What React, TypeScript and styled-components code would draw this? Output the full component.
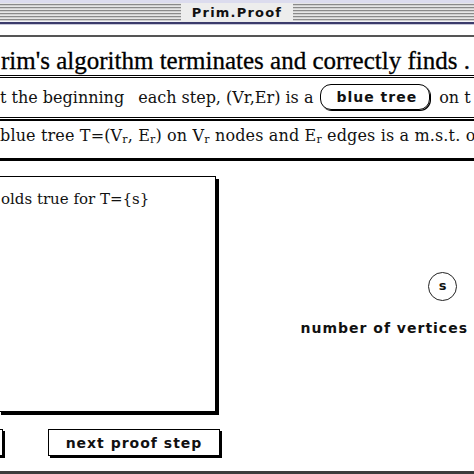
import React from "react";
import styled, { createGlobalStyle } from "styled-components";

const GlobalStyle = createGlobalStyle`
  html, body {
    margin: 0;
    padding: 0;
    background: #ffffff;
  }
`;

const Page = styled.div`
  width: 474px;
  height: 474px;
  overflow: hidden;
  background: #ffffff;
  display: flex;
  flex-direction: column;
  white-space: nowrap;
`;

const TitleBar = styled.div`
  flex: none;
  height: 25px;
  display: flex;
  justify-content: center;
  align-items: flex-start;
  background:
    linear-gradient(
      to bottom,
      #dcdcee 0 3px,
      transparent 3px 21px,
      #f4f4f8 21px 22px,
      #3c3c6c 22px 24px,
      #c8c8d8 24px 25px
    ),
    repeating-linear-gradient(to bottom, #e6e6e6 0 1px, #8a8a8a 1px 2px, #d0d0d0 2px 3px);
`;

const TitleLabel = styled.div`
  margin-top: 3px;
  height: 19px;
  padding: 0 11px;
  background: #ededed;
  font-family: "DejaVu Sans", sans-serif;
  font-weight: bold;
  font-size: 13px;
  letter-spacing: 1.2px;
  line-height: 19px;
  color: #111;
`;

const Rule = styled.div<{ $size: number; $color?: string; $gap?: number }>`
  flex: none;
  height: ${(p) => p.$size}px;
  background: ${(p) => p.$color || "#000"};
  margin-top: ${(p) => p.$gap || 0}px;
`;

const Heading = styled.div`
  flex: none;
  height: 38px;
  box-sizing: border-box;
  padding: 10px 0 0 1px;
  overflow: hidden;
  font-family: "Liberation Serif", serif;
  font-size: 25px;
  line-height: 28px;
  color: #000;
  -webkit-text-stroke: 0.3px #000;
`;

const TextRow = styled.div<{ $height: number; $line: number; $spacing?: number }>`
  flex: none;
  height: ${(p) => p.$height}px;
  line-height: ${(p) => p.$line}px;
  letter-spacing: ${(p) => p.$spacing || 0}px;
  font-family: "DejaVu Serif", serif;
  font-size: 16px;
  color: #111;
  overflow: hidden;
`;

const Gap = styled.span<{ $w: number }>`
  display: inline-block;
  width: ${(p) => p.$w}px;
`;

const Sub = styled.span`
  font-size: 11px;
  vertical-align: -2px;
  line-height: 1;
`;

const PillButton = styled.span`
  display: inline-block;
  vertical-align: middle;
  margin: -3px 9px 0 7px;
  height: 26px;
  line-height: 25px;
  padding: 0 12px 0 15px;
  box-sizing: border-box;
  border: 1px solid #000;
  border-radius: 11px;
  box-shadow: 1px 1px 0 #000;
  font-family: "DejaVu Sans", sans-serif;
  font-weight: bold;
  font-size: 14px;
  letter-spacing: 1px;
  color: #111;
`;

const Main = styled.div`
  flex: 1;
  display: grid;
  grid-template-columns: 221px 1fr;
`;

const LeftPane = styled.div`
  display: flex;
  flex-direction: column;
  padding-top: 15px;
`;

const ProofBox = styled.div`
  margin-left: -2px;
  width: 218px;
  height: 236px;
  box-sizing: border-box;
  border: 1px solid #000;
  box-shadow: 3px 3px 0 #000;
  padding: 13px 0 0 2px;
  font-family: "DejaVu Serif", serif;
  font-size: 15px;
  color: #111;
`;

const ButtonRow = styled.div`
  display: flex;
  gap: 45px;
  margin-top: 17px;
`;

const Button = styled.div<{ $width: number; $offset?: number }>`
  width: ${(p) => p.$width}px;
  margin-left: ${(p) => p.$offset || 0}px;
  height: 27px;
  box-sizing: border-box;
  border: 1px solid #000;
  box-shadow: 2px 2px 0 #000;
  background: #fff;
  display: flex;
  align-items: center;
  justify-content: center;
  font-family: "DejaVu Sans", sans-serif;
  font-weight: bold;
  font-size: 14px;
  letter-spacing: 1px;
  color: #111;
`;

const RightPane = styled.div`
  display: flex;
  flex-direction: column;
  align-items: flex-end;
  padding-top: 111px;
`;

const Node = styled.div`
  width: 29px;
  height: 29px;
  margin-right: 17px;
  box-sizing: border-box;
  border: 1px solid #222;
  border-radius: 50%;
  display: flex;
  align-items: center;
  justify-content: center;
  font-family: "DejaVu Sans", sans-serif;
  font-weight: bold;
  font-size: 13px;
  color: #111;
  padding-bottom: 2px;
`;

const Caption = styled.div`
  margin-top: 19px;
  margin-right: 6px;
  font-family: "DejaVu Sans", sans-serif;
  font-weight: bold;
  font-size: 14px;
  letter-spacing: 1px;
  color: #111;
`;

export default function App() {
  return (
    <>
      <GlobalStyle />
      <Page>
        <TitleBar>
          <TitleLabel>Prim.Proof</TitleLabel>
        </TitleBar>
        <Rule $size={2} $color="#555" $gap={10} />
        <Heading>rim's algorithm terminates and correctly finds .</Heading>
        <Rule $size={1} />
        <Rule $size={1} $gap={1} />
        <TextRow $height={39} $line={39}>
          t the beginning<Gap $w={14} />each step, (Vr,Er) is a
          <PillButton>blue tree</PillButton>on t
        </TextRow>
        <Rule $size={1} />
        <Rule $size={2} $gap={1} />
        <TextRow $height={37} $line={30} $spacing={0.15}>
          blue tree T=(V<Sub>r</Sub>, E<Sub>r</Sub>) on V<Sub>r</Sub> nodes and E<Sub>r</Sub> edges is a m.s.t. o
        </TextRow>
        <Rule $size={3} />
        <Main>
          <LeftPane>
            <ProofBox>olds true for T={"{s}"}</ProofBox>
            <ButtonRow>
              <Button $width={80} $offset={-77} />
              <Button $width={172}>next proof step</Button>
            </ButtonRow>
          </LeftPane>
          <RightPane>
            <Node>s</Node>
            <Caption>number of vertices</Caption>
          </RightPane>
        </Main>
        <Rule $size={3} $color="#3c3c3c" />
      </Page>
    </>
  );
}
